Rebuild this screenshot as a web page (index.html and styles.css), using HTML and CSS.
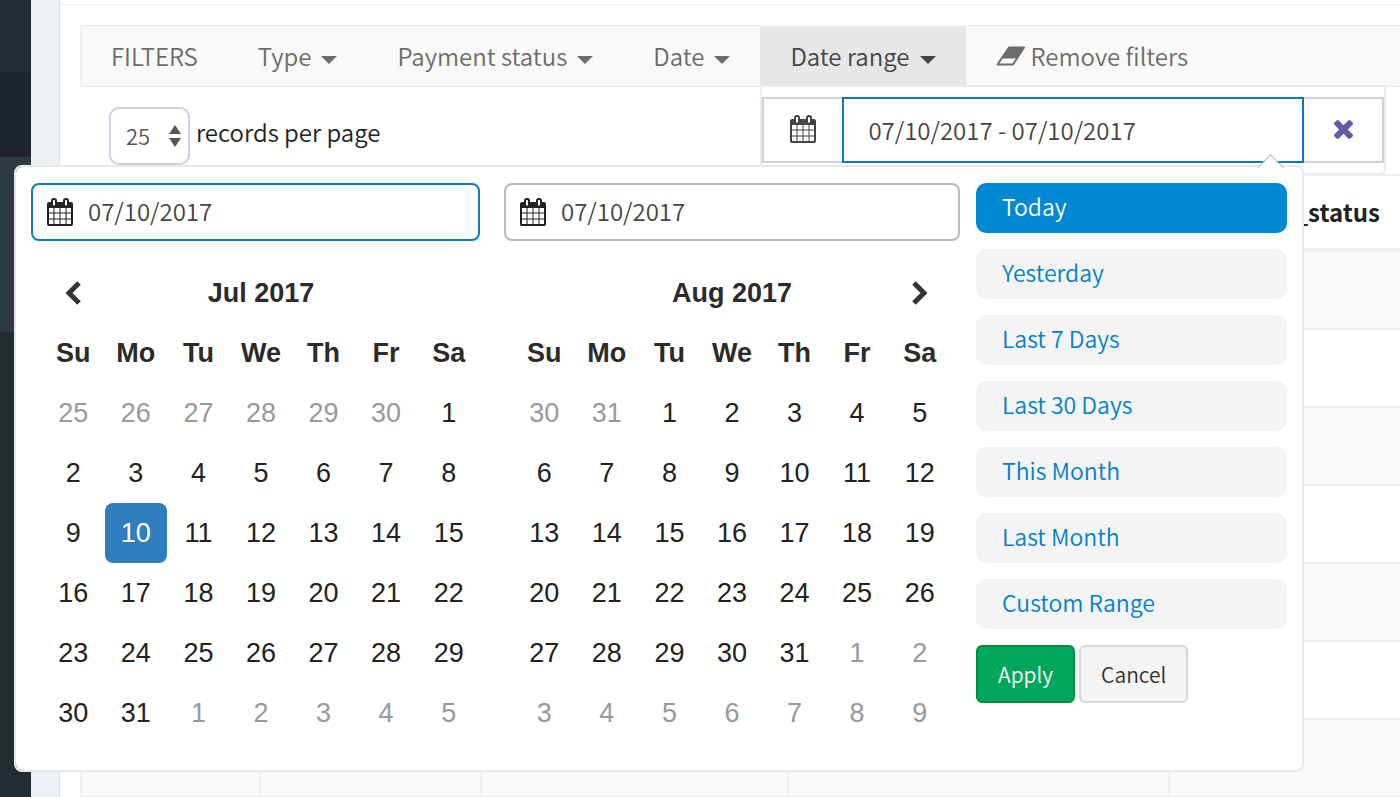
FILE: index.html
```
<!DOCTYPE html>
<html lang="en">
<head>
    <meta charset="UTF-8">
    <meta name="viewport" content="width=device-width, initial-scale=1.0">
    <title>Filters</title>
    <link rel="stylesheet" href="styles.css">
</head>
<body>
    <!-- shared icons -->
    <svg class="sprite" aria-hidden="true">
        <symbol id="calendar" viewBox="0 0 1664 1792"><path d="M128 1664h288v-288h-288v288zm352 0h320v-288h-320v288zm-352-352h288v-320h-288v320zm352 0h320v-320h-320v320zm-352-384h288v-288h-288v288zm736 736h320v-288h-320v288zm-384-736h320v-288h-320v288zm768 736h288v-288h-288v288zm-384-352h320v-320h-320v320zm-352-864v-288q0-13-9.500-22.500t-22.500-9.500h-64q-13 0-22.500 9.500t-9.500 22.500v288q0 13 9.500 22.500t22.500 9.500h64q13 0 22.500-9.500t9.500-22.500zm736 864h288v-320h-288v320zm-384-384h320v-288h-320v288zm384 0h288v-288h-288v288zm32-480v-288q0-13-9.500-22.500t-22.500-9.500h-64q-13 0-22.500 9.500t-9.500 22.500v288q0 13 9.500 22.500t22.500 9.500h64q13 0 22.500-9.500t9.500-22.500zm384-64v1280q0 52-38 90t-90 38h-1408q-52 0-90-38t-38-90v-1280q0-52 38-90t90-38h128v-96q0-66 47-113t113-47h64q66 0 113 47t47 113v96h384v-96q0-66 47-113t113-47h64q66 0 113 47t47 113v96h128q52 0 90 38t38 90z"/></symbol>
    </svg>

    <div class="wrapper">
        <aside class="sidebar">
            <div class="sidebar-top"></div>
            <div class="sidebar-active"></div>
            <div class="sidebar-sub"></div>
        </aside>

        <main class="box">
            <nav class="filters">
                <span class="filters-title">FILTERS</span>
                <a href="#">Type <span class="caret"></span></a>
                <a href="#">Payment status <span class="caret"></span></a>
                <a href="#">Date <span class="caret"></span></a>
                <div class="dropdown">
                    <a href="#" class="open">Date range <span class="caret"></span></a>
                    <div class="dropdown-menu">
                        <div class="input-group">
                            <label class="addon" for="daterange" aria-label="Date range"><svg class="icon"><use href="#calendar"/></svg></label>
                            <input type="text" id="daterange" value="07/10/2017 - 07/10/2017">
                            <button type="button" class="addon clear" aria-label="Clear">
                                <svg viewBox="302 366 1188 1188"><path d="M1490 1322q0 40-28 68l-136 136q-28 28-68 28t-68-28l-294-294-294 294q-28 28-68 28t-68-28l-136-136q-28-28-28-68t28-68l294-294-294-294q-28-28-28-68t28-68l136-136q28-28 68-28t68 28l294 294 294-294q28-28 68-28t68 28l136 136q28 28 28 68t-28 68l-294 294 294 294q28 28 28 68z"/></svg>
                            </button>
                        </div>
                    </div>
                </div>
                <a href="#"><svg class="eraser" viewBox="0 0 30 20"><path d="M13 1.500H28L17 18.500H1.500z" fill="none" stroke="currentColor" stroke-width="2" stroke-linejoin="round"/><path d="M13 1h15.500L21 12.500H5z"/></svg>Remove filters</a>
            </nav>

            <div class="length">
                <span class="select">
                    <select id="length">
                        <option>25</option>
                    </select>
                    <svg viewBox="0 0 12 22"><path d="M6 0l6 9H0zM6 22l6-9H0z"/></svg>
                </span>
                <label for="length">records per page</label>
            </div>

            <table class="data">
                <colgroup><col class="c1"><col class="c2"><col class="c3"><col class="c4"><col></colgroup>
                <thead>
                    <tr><th></th><th></th><th></th><th></th><th>_status</th></tr>
                </thead>
                <tbody>
                    <tr><td></td><td></td><td></td><td></td><td></td></tr>
                    <tr><td></td><td></td><td></td><td></td><td></td></tr>
                    <tr><td></td><td></td><td></td><td></td><td></td></tr>
                    <tr><td></td><td></td><td></td><td></td><td></td></tr>
                    <tr><td></td><td></td><td></td><td></td><td></td></tr>
                    <tr><td></td><td></td><td></td><td></td><td></td></tr>
                    <tr><td></td><td></td><td></td><td></td><td></td></tr>
                </tbody>
            </table>
        </main>

        <!-- date range picker -->
        <div class="picker">
            <div class="calendar left">
                <label class="date-input active">
                    <svg class="icon"><use href="#calendar"/></svg>
                    <input type="text" aria-label="Start date" value="07/10/2017">
                </label>
                <table>
                    <thead>
                        <tr>
                            <th><button type="button" aria-label="Previous month"><svg class="chevron" viewBox="0 0 16 24"><path d="M14 2L4 12l10 10"/></svg></button></th>
                            <th colspan="5">Jul 2017</th>
                            <th></th>
                        </tr>
                        <tr><th>Su</th><th>Mo</th><th>Tu</th><th>We</th><th>Th</th><th>Fr</th><th>Sa</th></tr>
                    </thead>
                    <tbody>
                        <tr><td class="off"><button>25</button></td><td class="off"><button>26</button></td><td class="off"><button>27</button></td><td class="off"><button>28</button></td><td class="off"><button>29</button></td><td class="off"><button>30</button></td><td><button>1</button></td></tr>
                        <tr><td><button>2</button></td><td><button>3</button></td><td><button>4</button></td><td><button>5</button></td><td><button>6</button></td><td><button>7</button></td><td><button>8</button></td></tr>
                        <tr><td><button>9</button></td><td class="selected"><button>10</button></td><td><button>11</button></td><td><button>12</button></td><td><button>13</button></td><td><button>14</button></td><td><button>15</button></td></tr>
                        <tr><td><button>16</button></td><td><button>17</button></td><td><button>18</button></td><td><button>19</button></td><td><button>20</button></td><td><button>21</button></td><td><button>22</button></td></tr>
                        <tr><td><button>23</button></td><td><button>24</button></td><td><button>25</button></td><td><button>26</button></td><td><button>27</button></td><td><button>28</button></td><td><button>29</button></td></tr>
                        <tr><td><button>30</button></td><td><button>31</button></td><td class="off"><button>1</button></td><td class="off"><button>2</button></td><td class="off"><button>3</button></td><td class="off"><button>4</button></td><td class="off"><button>5</button></td></tr>
                    </tbody>
                </table>
            </div>

            <div class="calendar right">
                <label class="date-input">
                    <svg class="icon"><use href="#calendar"/></svg>
                    <input type="text" aria-label="End date" value="07/10/2017">
                </label>
                <table>
                    <thead>
                        <tr>
                            <th></th>
                            <th colspan="5">Aug 2017</th>
                            <th><button type="button" aria-label="Next month"><svg class="chevron" viewBox="0 0 16 24"><path d="M2 2l10 10L2 22"/></svg></button></th>
                        </tr>
                        <tr><th>Su</th><th>Mo</th><th>Tu</th><th>We</th><th>Th</th><th>Fr</th><th>Sa</th></tr>
                    </thead>
                    <tbody>
                        <tr><td class="off"><button>30</button></td><td class="off"><button>31</button></td><td><button>1</button></td><td><button>2</button></td><td><button>3</button></td><td><button>4</button></td><td><button>5</button></td></tr>
                        <tr><td><button>6</button></td><td><button>7</button></td><td><button>8</button></td><td><button>9</button></td><td><button>10</button></td><td><button>11</button></td><td><button>12</button></td></tr>
                        <tr><td><button>13</button></td><td><button>14</button></td><td><button>15</button></td><td><button>16</button></td><td><button>17</button></td><td><button>18</button></td><td><button>19</button></td></tr>
                        <tr><td><button>20</button></td><td><button>21</button></td><td><button>22</button></td><td><button>23</button></td><td><button>24</button></td><td><button>25</button></td><td><button>26</button></td></tr>
                        <tr><td><button>27</button></td><td><button>28</button></td><td><button>29</button></td><td><button>30</button></td><td><button>31</button></td><td class="off"><button>1</button></td><td class="off"><button>2</button></td></tr>
                        <tr><td class="off"><button>3</button></td><td class="off"><button>4</button></td><td class="off"><button>5</button></td><td class="off"><button>6</button></td><td class="off"><button>7</button></td><td class="off"><button>8</button></td><td class="off"><button>9</button></td></tr>
                    </tbody>
                </table>
            </div>

            <div class="ranges">
                <button type="button" class="range active">Today</button>
                <button type="button" class="range">Yesterday</button>
                <button type="button" class="range">Last 7 Days</button>
                <button type="button" class="range">Last 30 Days</button>
                <button type="button" class="range">This Month</button>
                <button type="button" class="range">Last Month</button>
                <button type="button" class="range">Custom Range</button>
                <div class="actions">
                    <button type="button" class="btn apply">Apply</button>
                    <button type="button" class="btn">Cancel</button>
                </div>
            </div>
        </div>
    </div>
</body>
</html>
```
FILE: styles.css
```
* {
    box-sizing: border-box;
}
body {
    margin: 0;
    font-family: "Noto Sans CJK SC", "Noto Sans", sans-serif;
    font-size: 24px;
    font-weight: 350;
    line-height: 36px;
    color: #222;
    background-color: #ecf0f5;
}
button, input, select {
    font: inherit;
    color: inherit;
    margin: 0;
    padding: 0;
    border: none;
    outline: none;
    background: none;
}
button {
    cursor: pointer;
}
a {
    color: inherit;
    text-decoration: none;
}
.sprite {
    position: absolute;
    width: 0;
    height: 0;
}
.icon {
    width: 26px;
    height: 28px;
    flex: none;
    fill: currentColor;
}
.wrapper {
    position: relative;
    display: flex;
    min-height: 100vh;
    overflow: hidden;
}

/* sidebar */
.sidebar {
    flex: none;
    width: 31px;
    background-color: #222d32;
}
.sidebar-top {
    height: 72px;
}
.sidebar-active {
    height: 85px;
    background-color: #1e252b;
}
.sidebar-sub {
    height: 175px;
    background-color: #2c3b41;
}

/* content */
.box {
    flex: 1;
    min-width: 0;
    margin-left: 28px;
    padding: 25px 0 0 20px;
    border-left: 1px solid #d8deea;
    background: linear-gradient(#f0f0f0, #f0f0f0) 0 4px / 100% 1px no-repeat #fff;
}
.filters {
    display: flex;
    height: 62px;
    border: 2px solid #f0f0f0;
    border-right: none;
    background-color: #f9f9f9;
    color: #6c6c6c;
    white-space: nowrap;
}
.filters-title, .filters a {
    display: flex;
    align-items: center;
    padding: 0 30px;
}
.filters-title {
    padding-left: 29px;
}
.filters .open {
    height: 100%;
    color: #444;
    background-color: #e7e7e7;
}
.caret {
    margin: 8px 0 0 10px;
    border: 8px solid transparent;
    border-top-color: currentColor;
    border-bottom: none;
}
.eraser {
    width: 30px;
    height: 20px;
    margin-right: 5px;
    fill: currentColor;
}
.dropdown {
    position: relative;
}
.dropdown-menu {
    position: absolute;
    top: 100%;
    left: 0;
    width: 626px;
    padding: 10px 0;
    border: 2px solid #ececec;
    border-radius: 0 0 6px 6px;
    background-color: #fff;
}
.input-group {
    display: flex;
    height: 66px;
    color: #444;
}
.input-group input {
    flex: 1;
    min-width: 0;
    padding: 0 24px;
    border: 2px solid #0c7ab8;
}
.addon {
    display: flex;
    align-items: center;
    justify-content: center;
    width: 80px;
    padding-bottom: 2px;
    border: 2px solid #ccd0e0;
}
label.addon {
    border-right: none;
}
.clear {
    border-left: none;
    color: #605ca8;
}
.clear svg {
    width: 19px;
    height: 19px;
    fill: currentColor;
}
.length {
    display: flex;
    align-items: center;
    gap: 6px;
    height: 87px;
    padding: 11px 0 0 29px;
}
.length label {
    padding-bottom: 8px;
}
.select {
    display: flex;
    align-items: center;
    width: 81px;
    height: 58px;
    padding-right: 7px;
    border: 2px solid #ccd0e0;
    border-radius: 10px;
    color: #555;
}
.select select {
    flex: 1;
    min-width: 0;
    height: 100%;
    padding: 0 0 2px 15px;
    font-size: 22px;
    appearance: none;
}
.select svg {
    width: 12px;
    height: 22px;
    fill: currentColor;
}

/* records table */
.data {
    width: 100%;
    table-layout: fixed;
    border-spacing: 0;
    border-top: 2px solid #f0f0f0;
}
.c1 {
    width: 179px;
}
.c2 {
    width: 221px;
}
.c3 {
    width: 307px;
}
.c4 {
    width: 381px;
}
.data th, .data td {
    height: 78px;
    padding: 0;
    border-left: 2px solid #f0f0f0;
    border-bottom: 2px solid #f0f0f0;
}
.data th {
    height: 76px;
    padding-right: 20px;
    border-bottom-width: 4px;
    text-align: right;
}
.data tbody tr:nth-child(odd) {
    background-color: #f9f9f9;
}

/* date range picker */
.picker {
    position: absolute;
    top: 165px;
    left: 14px;
    right: 96px;
    display: grid;
    grid-template-columns: 449fr 496fr 311fr;
    padding: 16px 15px 27px;
    border: 2px solid #e9e9e9;
    border-radius: 8px;
    background-color: #fff;
    background-clip: padding-box;
}
.picker::before {
    content: "";
    position: absolute;
    top: -9px;
    right: 22px;
    width: 18px;
    height: 18px;
    border: 1px solid #bbb;
    border-right: none;
    border-bottom: none;
    background: linear-gradient(135deg, #fff 50%, transparent 50%);
    transform: rotate(45deg);
}
.calendar {
    min-width: 0;
}
.calendar.right {
    margin: 0 16px 0 24px;
}
.date-input {
    display: flex;
    align-items: center;
    gap: 15px;
    height: 58px;
    padding-left: 14px;
    border: 2px solid #bbb;
    border-radius: 8px;
    color: #222;
}
.date-input.active {
    border-color: #0a7cc4;
}
.date-input input {
    flex: 1;
    min-width: 0;
    padding-bottom: 2px;
    color: #444;
}
.calendar table {
    width: 100%;
    margin-top: 22px;
    table-layout: fixed;
    border-spacing: 0;
    font-family: "Liberation Sans", Arial, sans-serif;
    font-size: 27px;
    text-align: center;
}
.calendar.left table {
    width: calc(100% - 11px);
    margin-left: 11px;
}
.calendar.right table {
    width: calc(100% - 18px);
    margin-left: 9px;
}
.calendar th, .calendar td {
    height: 60px;
    padding: 0;
}
.calendar thead {
    color: #2b2b2b;
}
.calendar th button {
    display: inline-flex;
    padding-bottom: 4px;
    vertical-align: middle;
}
.calendar td button {
    width: 100%;
    height: 60px;
    border-radius: 8px;
}
.calendar .off {
    color: #999;
}
.calendar .selected button {
    color: #fff;
    background-color: #307dc0;
}
.chevron {
    width: 16px;
    height: 24px;
    fill: none;
    stroke: #333;
    stroke-width: 5;
}
.ranges {
    display: flex;
    flex-direction: column;
    gap: 16px;
}
.range {
    height: 50px;
    padding: 0 26px 4px;
    border-radius: 10px;
    font-size: 23px;
    text-align: left;
    color: #0081cc;
    background-color: #f4f4f4;
}
.range.active {
    color: #fff;
    background-color: #0088d2;
}
.actions {
    display: flex;
    gap: 4px;
}
.btn {
    height: 58px;
    padding: 0 20px;
    border: 2px solid #d8d8d8;
    border-radius: 6px;
    font-size: 21px;
    color: #333;
    background-color: #f4f4f4;
}
.apply {
    color: #fff;
    border-color: #008d3f;
    background-color: #00a65a;
}
```
